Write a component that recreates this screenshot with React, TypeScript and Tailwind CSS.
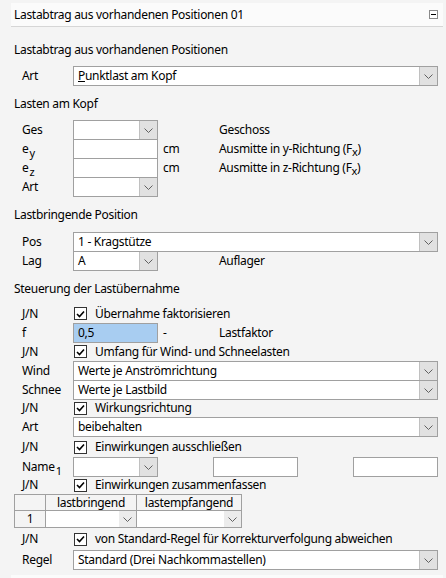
import React from 'react';

const Chevron: React.FC = () => (
  <svg width="9" height="5" viewBox="0 0 9 5" className="block">
    <path d="M0.5 0.5 L4.5 4.5 L8.5 0.5" fill="none" stroke="#606060" strokeWidth="1" />
  </svg>
);

const Select: React.FC<{ w: number; value?: React.ReactNode }> = ({ w, value }) => (
  <div
    className="flex h-[20px] shrink-0 border border-[#a0a0a0] bg-white"
    style={{ width: w }}
  >
    <div className="flex-1 pl-[4px] leading-[18px] whitespace-nowrap overflow-hidden">{value}</div>
    <div className="flex w-[18px] items-center justify-center border-l border-[#c0c0c0] bg-[#e1e1e1]">
      <Chevron />
    </div>
  </div>
);

const TextBox: React.FC<{ value?: string; selected?: boolean }> = ({ value, selected }) => (
  <div className="h-[20px] w-[85px] shrink-0 border border-[#a0a0a0] bg-white">
    {value && (
      <span className={`inline-block h-[18px] pl-[4px] leading-[18px] ${selected ? 'w-full bg-[#a8cdf1]' : ''}`}>
        {value}
      </span>
    )}
  </div>
);

const Check: React.FC = () => (
  <div className="ml-[1px] flex h-[13px] w-[13px] shrink-0 items-center justify-center border border-[#333333] bg-white">
    <svg width="9" height="8" viewBox="0 0 9 8">
      <path d="M1 4 L3.5 6.5 L8 1.5" fill="none" stroke="#000" strokeWidth="1.6" />
    </svg>
  </div>
);

const Title: React.FC<{ children: React.ReactNode; mt: string }> = ({ children, mt }) => (
  <div className={`h-[16px] pl-[14px] leading-[16px] ${mt}`}>{children}</div>
);

const Row: React.FC<{ label: React.ReactNode; h: string; children: React.ReactNode }> = ({ label, h, children }) => (
  <div className={`flex items-start pl-[22px] ${h}`}>
    <div className="w-[51px] shrink-0 self-center leading-[16px]">{label}</div>
    {children}
  </div>
);

const CheckRow: React.FC<{ h: string; text: string }> = ({ h, text }) => (
  <div className={`flex items-center pl-[22px] ${h}`}>
    <div className="w-[51px] shrink-0">J/N</div>
    <Check />
    <span className="ml-[8px] whitespace-nowrap">{text}</span>
  </div>
);

const Sub: React.FC<{ base: string; sub: string }> = ({ base, sub }) => (
  <span>
    {base}
    <span className="relative top-[4px] ml-[1px] text-[11px]">{sub}</span>
  </span>
);

const Desc: React.FC<{ unit?: string; text?: React.ReactNode }> = ({ unit, text }) => (
  <div className="flex self-center leading-[16px]">
    <span className="w-[61px] pl-[5px]">{unit}</span>
    <span className="whitespace-nowrap">{text}</span>
  </div>
);

export default function App() {
  return (
    <div
      className="h-[578px] w-[446px] overflow-hidden bg-[#f4f4f4] text-[12px] tracking-[-0.3px] text-black"
      style={{ fontFamily: '"Noto Sans", "Open Sans", sans-serif' }}
    >
      <div className="mt-[3px] ml-[11px] mr-[3px] flex h-[24px] items-center justify-between border-b border-[#d6d6d6] bg-[#fbfbfb] pl-[3px] pr-[5px]">
        <span>Lastabtrag aus vorhandenen Positionen 01</span>
        <div className="flex h-[9px] w-[9px] items-center justify-center border border-[#8a8a8a] bg-white">
          <div className="h-[1px] w-[5px] bg-black" />
        </div>
      </div>

      <Title mt="mt-[15px]">Lastabtrag aus vorhandenen Positionen</Title>
      <div className="mt-[8px]">
        <Row label="Art" h="h-[20px]">
          <Select w={365} value={<span><span className="underline">P</span>unktlast am Kopf</span>} />
        </Row>
      </div>

      <Title mt="mt-[10px]">Lasten am Kopf</Title>
      <div className="mt-[8px]">
        <Row label="Ges" h="h-[19px]">
          <Select w={85} />
          <Desc text="Geschoss" />
        </Row>
        <Row label={<Sub base="e" sub="y" />} h="h-[19px]">
          <TextBox />
          <Desc unit="cm" text={<span>Ausmitte in y-Richtung (F<span className="relative top-[3px] text-[11px]">x</span>)</span>} />
        </Row>
        <Row label={<Sub base="e" sub="z" />} h="h-[19px]">
          <TextBox />
          <Desc unit="cm" text={<span>Ausmitte in z-Richtung (F<span className="relative top-[3px] text-[11px]">x</span>)</span>} />
        </Row>
        <Row label="Art" h="h-[19px]">
          <Select w={85} />
        </Row>
      </div>

      <Title mt="mt-[11px]">Lastbringende Position</Title>
      <div className="mt-[9px]">
        <Row label="Pos" h="h-[19px]">
          <Select w={365} value="1 - Kragstütze" />
        </Row>
        <Row label="Lag" h="h-[19px]">
          <Select w={85} value="A" />
          <Desc text="Auflager" />
        </Row>
      </div>

      <Title mt="mt-[11px]">Steuerung der Lastübernahme</Title>
      <div className="mt-[7px]">
        <CheckRow h="h-[19px]" text="Übernahme faktorisieren" />
        <Row label="f" h="h-[19px]">
          <TextBox value="0,5" selected />
          <Desc unit="-" text="Lastfaktor" />
        </Row>
        <CheckRow h="h-[19px]" text="Umfang für Wind- und Schneelasten" />
        <Row label="Wind" h="h-[19px]">
          <Select w={365} value="Werte je Anströmrichtung" />
        </Row>
        <Row label="Schnee" h="h-[19px]">
          <Select w={365} value="Werte je Lastbild" />
        </Row>
        <CheckRow h="h-[18px]" text="Wirkungsrichtung" />
        <Row label="Art" h="h-[20px]">
          <Select w={365} value="beibehalten" />
        </Row>
        <CheckRow h="h-[20px]" text="Einwirkungen ausschließen" />
        <Row label={<Sub base="Name" sub="1" />} h="h-[19px]">
          <Select w={85} />
          <div className="ml-[55px]">
            <TextBox />
          </div>
          <div className="ml-[55px]">
            <TextBox />
          </div>
        </Row>
        <CheckRow h="h-[18px]" text="Einwirkungen zusammenfassen" />

        <div className="ml-[14px] w-[228px] border-l border-t border-[#a0a0a0]">
          <div className="flex h-[16px] leading-[15px]">
            <div className="w-[31px] border-b border-r border-[#a0a0a0]" />
            <div className="w-[91px] border-b border-r border-[#a0a0a0] text-center">lastbringend</div>
            <div className="w-[105px] border-b border-r border-[#a0a0a0] text-center">lastempfangend</div>
          </div>
          <div className="flex h-[17px] leading-[16px]">
            <div className="w-[31px] border-b border-r border-[#a0a0a0] text-center">1</div>
            <div className="flex w-[91px] border-b border-r border-[#a0a0a0] bg-white">
              <div className="flex-1" />
              <div className="flex w-[17px] items-center justify-center bg-[#ececec]">
                <Chevron />
              </div>
            </div>
            <div className="flex w-[105px] border-b border-r border-[#a0a0a0] bg-white">
              <div className="flex-1" />
              <div className="flex w-[17px] items-center justify-center bg-[#ececec]">
                <Chevron />
              </div>
            </div>
          </div>
        </div>

        <CheckRow h="h-[22px]" text="von Standard-Regel für Korrekturverfolgung abweichen" />
        <Row label="Regel" h="h-[20px]">
          <Select w={365} value="Standard (Drei Nachkommastellen)" />
        </Row>
      </div>
      <div className="mt-[5px] ml-[11px] mr-[3px] h-[10px] bg-[#fbfbfb]" />
    </div>
  );
}
